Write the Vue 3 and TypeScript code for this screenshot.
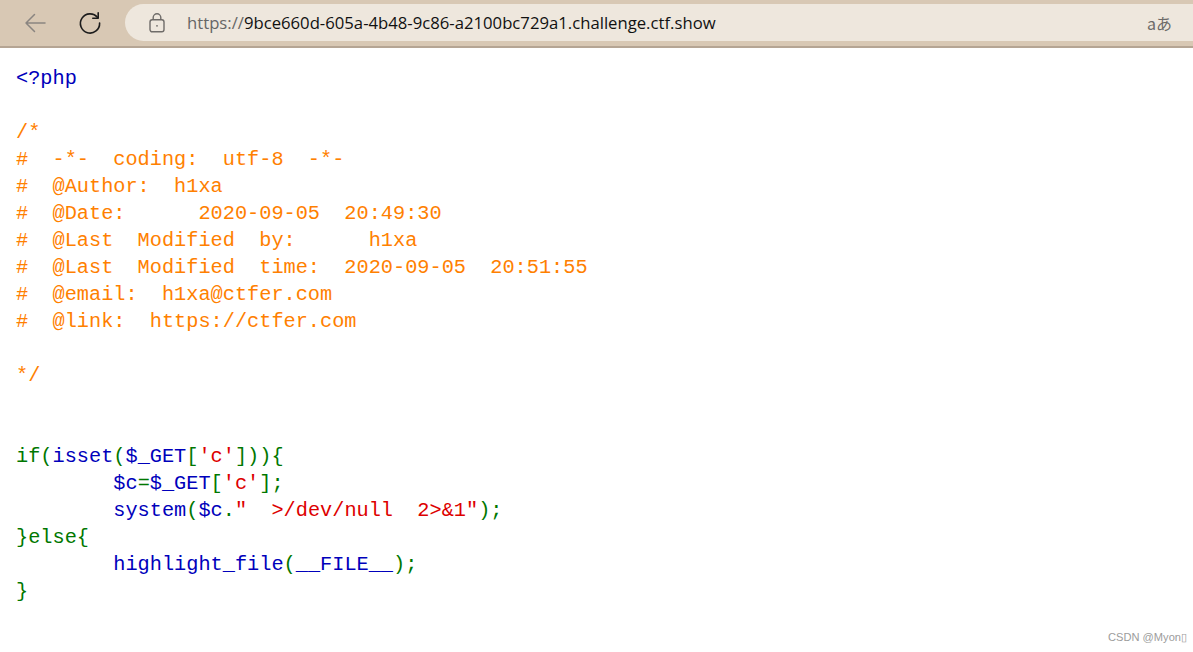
<script setup lang="ts">
type Kind = 'd' | 'c' | 'k' | 's'
type Token = [Kind, string]

const lines: Token[][] = [
  [['d', '<?php']],
  [],
  [['c', '/*']],
  [['c', '#  -*-  coding:  utf-8  -*-']],
  [['c', '#  @Author:  h1xa']],
  [['c', '#  @Date:      2020-09-05  20:49:30']],
  [['c', '#  @Last  Modified  by:      h1xa']],
  [['c', '#  @Last  Modified  time:  2020-09-05  20:51:55']],
  [['c', '#  @email:  h1xa@ctfer.com']],
  [['c', '#  @link:  https://ctfer.com']],
  [],
  [['c', '*/']],
  [],
  [],
  [['k', 'if('], ['d', 'isset'], ['k', '('], ['d', '$_GET'], ['k', '['], ['s', "'c'"], ['k', '])){']],
  [['k', '        '], ['d', '$c'], ['k', '='], ['d', '$_GET'], ['k', '['], ['s', "'c'"], ['k', '];']],
  [['k', '        '], ['d', 'system'], ['k', '('], ['d', '$c'], ['k', '.'], ['s', '"  >/dev/null  2>&1"'], ['k', ');']],
  [['k', '}else{']],
  [['k', '        '], ['d', 'highlight_file'], ['k', '('], ['d', '__FILE__'], ['k', ');']],
  [['k', '}']],
]
</script>

<template>
  <div class="page">
    <header class="toolbar">
      <button class="nav back" aria-label="Back">
        <svg width="24" height="24" viewBox="0 0 24 24" fill="none" stroke="#8a8580" stroke-width="1.5" stroke-linecap="round" stroke-linejoin="round">
          <path d="M22 12H3M11.5 3.5 3 12l8.5 8.5" />
        </svg>
      </button>
      <button class="nav reload" aria-label="Reload">
        <svg width="24" height="24" viewBox="0 0 24 24" fill="none" stroke="#1c1c1c" stroke-width="1.6" stroke-linecap="round" stroke-linejoin="round">
          <path d="M19.6 6.6A9.6 9.6 0 1 0 21.6 12" />
          <path d="M20.2 1.8v5.4h-5.4" />
        </svg>
      </button>
      <div class="address">
        <svg class="lock" width="16" height="20" viewBox="0 0 16 20" fill="none" stroke="#6f6c69" stroke-width="1.4" stroke-linejoin="round">
          <rect x="1" y="6.8" width="14" height="12" rx="2.2" />
          <path d="M4.2 6.8V4.6a3.8 3.8 0 0 1 7.6 0v2.2" />
          <circle cx="8" cy="12.8" r="0.9" fill="#6f6c69" stroke="none" />
        </svg>
        <span class="url"><span class="scheme">https://</span>9bce660d-605a-4b48-9c86-a2100bc729a1.challenge.ctf.show</span>
        <span class="translate">aあ</span>
      </div>
    </header>
    <main class="content">
      <code class="code">
        <div v-for="(line, i) in lines" :key="i" class="line"><span v-for="(t, j) in line" :key="j" :class="t[0]">{{ t[1] }}</span></div>
      </code>
    </main>
    <div class="mark">CSDN @Myon▯</div>
  </div>
</template>

<style>
html, body { margin: 0; background: #fff; overflow: hidden; }
</style>

<style scoped>
.page {
  position: relative;
  width: 1193px;
  height: 652px;
  overflow: hidden;
  background: #fff;
}
.toolbar {
  box-sizing: border-box;
  height: 48px;
  display: flex;
  align-items: flex-start;
  background: #d8c8b4;
  border-bottom: 2px solid #b5a594;
  padding-top: 4px;
}
.nav {
  border: 0;
  padding: 0;
  background: none;
  width: 24px;
  height: 24px;
  margin-top: 7px;
  display: flex;
}
.back { margin-left: 23px; }
.reload { margin-left: 31px; }
.address {
  box-sizing: border-box;
  margin-left: 23px;
  flex: 1;
  height: 37px;
  display: flex;
  align-items: center;
  background: #eee7dd;
  border-radius: 18.5px 0 0 18.5px;
  padding-left: 24px;
  font-family: "Open Sans", "Noto Sans", sans-serif;
}
.lock { flex: none; }
.url {
  margin-left: 22px;
  font-size: 16.7px;
  color: #111;
  white-space: pre;
  flex: 1;
}
.scheme { color: #666; }
.translate {
  margin-right: 21px;
  color: #6c6a68;
  font-size: 16px;
  font-family: "Noto Sans CJK JP", sans-serif;
}
.content { padding: 17px 16px 0; }
.code {
  display: block;
  font-family: "Liberation Mono", monospace;
  font-size: 20.28px;
  line-height: 27px;
  white-space: normal;
}
.line {
  height: 27px;
  white-space: pre;
}
.d { color: #0000bb; }
.c { color: #ff8000; }
.k { color: #007700; }
.s { color: #dd0000; }
.mark {
  position: absolute;
  right: 6px;
  bottom: 9px;
  font-family: "Liberation Sans", sans-serif;
  font-size: 11.1px;
  line-height: 12px;
  color: #9c9c9c;
}
</style>
